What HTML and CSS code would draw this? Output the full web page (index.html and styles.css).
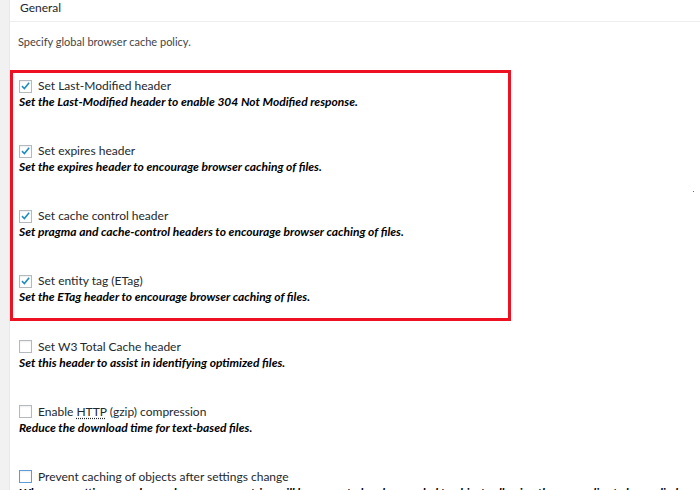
FILE: index.html
```html
<!DOCTYPE html>
<html>
<head>
<meta charset="utf-8">
<link rel="stylesheet" href="styles.css">
</head>
<body>
<div class="page">
  <div class="strip"></div>
  <div class="panel">
    <div class="panel-header">General</div>
    <p class="intro">Specify global browser cache policy.</p>
    <div class="highlight">
      <div class="item">
        <label class="opt"><span class="cb checked"><svg viewBox="0 0 14 14"><path d="M2.5 7.2 L5.6 10.2 L11.6 2.8" /></svg></span>Set Last-Modified header</label>
        <p class="desc">Set the Last-Modified header to enable 304 Not Modified response.</p>
      </div>
      <div class="item">
        <label class="opt"><span class="cb checked"><svg viewBox="0 0 14 14"><path d="M2.5 7.2 L5.6 10.2 L11.6 2.8" /></svg></span>Set expires header</label>
        <p class="desc">Set the expires header to encourage browser caching of files.</p>
      </div>
      <div class="item">
        <label class="opt"><span class="cb checked"><svg viewBox="0 0 14 14"><path d="M2.5 7.2 L5.6 10.2 L11.6 2.8" /></svg></span>Set cache control header</label>
        <p class="desc">Set pragma and cache-control headers to encourage browser caching of files.</p>
      </div>
      <div class="item">
        <label class="opt"><span class="cb checked"><svg viewBox="0 0 14 14"><path d="M2.5 7.2 L5.6 10.2 L11.6 2.8" /></svg></span>Set entity tag (ETag)</label>
        <p class="desc">Set the ETag header to encourage browser caching of files.</p>
      </div>
    </div>
    <div class="rest">
      <div class="item">
        <label class="opt"><span class="cb"></span>Set W3 Total Cache header</label>
        <p class="desc">Set this header to assist in identifying optimized files.</p>
      </div>
      <div class="item">
        <label class="opt"><span class="cb"></span>Enable <abbr title="Hypertext Transfer Protocol">HTTP</abbr> (gzip) compression</label>
        <p class="desc">Reduce the download time for text-based files.</p>
      </div>
      <div class="item">
        <label class="opt"><span class="cb focus"></span>Prevent caching of objects after settings change</label>
        <p class="desc">Whenever settings are changed, a new query string will be generated and appended to objects allowing the new policy to be applied.</p>
      </div>
    </div>
  </div>
</div>
<span class="dot"></span>
</body>
</html>
```
FILE: styles.css
```css
html, body {
  margin: 0;
  padding: 0;
  background: #fff;
}
body {
  font-family: "Lato", "Open Sans", sans-serif;
  font-size: 12px;
  color: #23282d;
  overflow: hidden;
  height: 490px;
}
.page {
  display: flex;
  min-height: 490px;
}
.strip {
  width: 9px;
  flex: none;
  background: #f1f1f1;
  border-right: 1px solid #e8e8e8;
}
.panel {
  flex: 1;
  background: #fff;
}
.panel-header {
  height: 22px;
  line-height: 16px;
  padding-left: 10px;
  border-bottom: 1px solid #eeeeee;
  box-sizing: border-box;
  color: #23282d;
}
.intro {
  margin: 12px 0 0 8px;
  line-height: 16px;
  font-size: 11px;
  color: #444;
}
.highlight {
  margin-top: 20px;
  width: 501px;
  box-sizing: border-box;
  border: 3px solid #ee1122;
  padding: 5px 6px 14px 6px;
}
.rest {
  padding: 18px 6px 0 9px;
}
.item + .item {
  margin-top: 34px;
}
.opt {
  display: block;
  height: 16px;
  line-height: 16px;
  color: #23282d;
  white-space: nowrap;
}
.cb {
  width: 13px;
  height: 13px;
  box-sizing: border-box;
  border: 1px solid #b4b9be;
  background: #fff;
  margin-right: 6px;
  display: inline-flex;
  align-items: center;
  justify-content: center;
  vertical-align: -2px;
  box-shadow: inset 0 1px 2px rgba(0,0,0,0.07);
}
.cb svg {
  width: 12px;
  height: 12px;
  fill: none;
  stroke: #1e8cbe;
  stroke-width: 2;
}
.cb.focus {
  border-color: #5b9dd9;
}
abbr {
  text-decoration: underline dotted;
  text-underline-offset: 2px;
}
.desc {
  margin: 0;
  line-height: 15px;
  font-size: 12px;
  font-weight: bold;
  font-style: italic;
  color: #000;
  white-space: nowrap;
}
.dot {
  position: absolute;
  left: 693px;
  top: 191px;
  width: 1px;
  height: 1px;
  background: #e33;
}
```
